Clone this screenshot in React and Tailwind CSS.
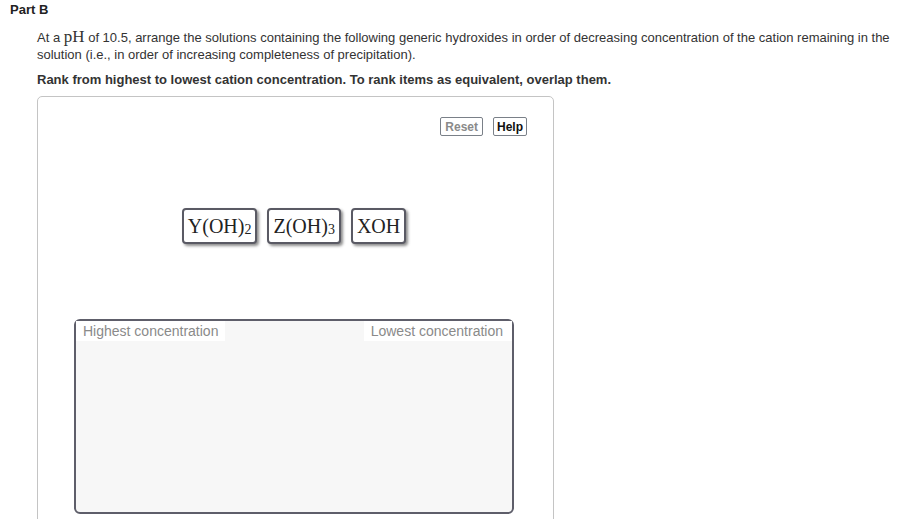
export default function App() {
  const tile =
    "h-[36px] flex items-center px-[4px] bg-white border-2 border-[#5a5a64] rounded-[4px] shadow-[2px_2px_3px_rgba(0,0,0,0.45)] text-[20px] text-[#222] leading-none";
  return (
    <div
      className="w-[923px] h-[519px] overflow-hidden bg-white text-[#333]"
      style={{ fontFamily: '"Liberation Sans", Arial, sans-serif' }}
    >
      <div className="pl-[10px] pt-[1px] text-[13px] font-bold text-[#222] leading-[18px]">Part B</div>
      <div className="pl-[37px] pt-[10px] w-[900px]">
        <p className="text-[13px] leading-[17px] text-[#333]">
          At a{" "}
          <span
            className="inline-block text-[17px] leading-[13px]"
            style={{ fontFamily: '"Liberation Serif", serif' }}
          >
            pH
          </span>{" "}
          of 10.5, arrange the solutions containing the following generic hydroxides in order of decreasing
          concentration of the cation remaining in the solution (i.e., in order of increasing completeness of
          precipitation).
        </p>
        <p className="mt-[8px] text-[13px] leading-[17px] font-bold text-[#333]">
          Rank from highest to lowest cation concentration. To rank items as equivalent, overlap them.
        </p>
        <div className="mt-[8px] w-[517px] h-[440px] border border-[#c4c4c4] rounded-[5px] flex flex-col">
          <div className="flex justify-end gap-[10px] pt-[20px] pr-[26px]">
            <button className="h-[19px] px-[4px] border border-[#7a8088] rounded-[2px] text-[12px] font-bold text-[#8a8a8a] leading-none">
              Reset
            </button>
            <button className="h-[19px] px-[3px] border border-[#7a8088] rounded-[2px] text-[12px] font-bold text-[#111] leading-none">
              Help
            </button>
          </div>
          <div
            className="flex justify-center gap-[10px] mt-[72px] pr-[3px]"
            style={{ fontFamily: '"Liberation Serif", "Times New Roman", serif' }}
          >
            <div className={tile}>
              Y(OH)<span className="text-[14px] relative top-[4px]">2</span>
            </div>
            <div className={tile}>
              Z(OH)<span className="text-[14px] relative top-[4px]">3</span>
            </div>
            <div className={tile}>XOH</div>
          </div>
          <div className="ml-[36px] mt-[75px] w-[440px] h-[195px] bg-[#f7f7f7] border-2 border-[#5e5e6a] rounded-[6px] flex justify-between items-start">
            <div className="bg-white h-[20px] pl-[7px] pr-[7px] text-[14px] leading-[20px] text-[#8a8a8a]">
              Highest concentration
            </div>
            <div className="bg-white h-[20px] pl-[7px] pr-[9px] text-[14px] leading-[20px] text-[#8a8a8a]">
              Lowest concentration
            </div>
          </div>
        </div>
      </div>
    </div>
  );
}
